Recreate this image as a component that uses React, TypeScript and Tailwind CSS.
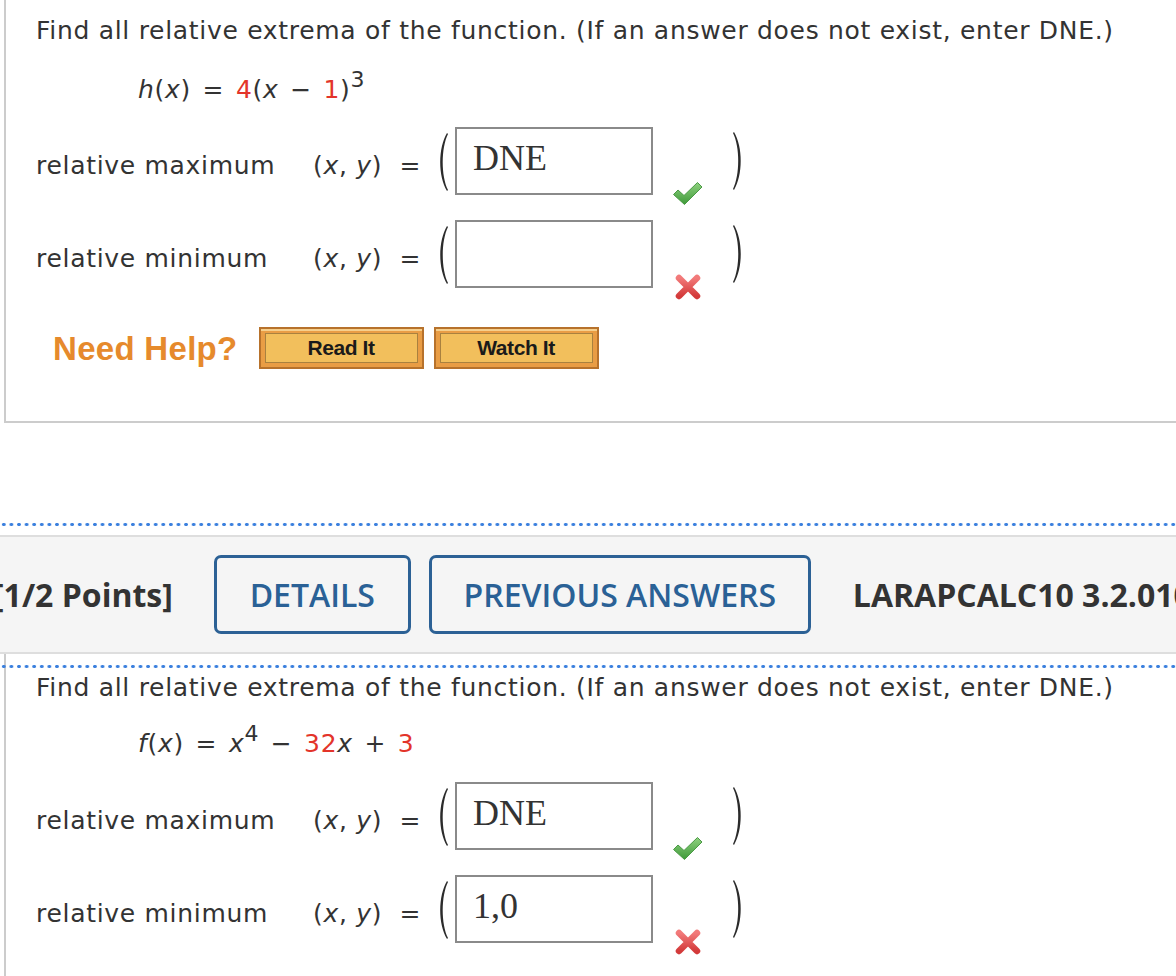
import React from "react";

const sans = { fontFamily: '"DejaVu Sans", Verdana, sans-serif' };

function Paren({ right = false }: { right?: boolean }) {
  return (
    <svg width="14" height="60" viewBox="0 0 14 60" className="shrink-0">
      <g transform={right ? "translate(14,0) scale(-1,1)" : undefined}>
        <path d="M11 1 C2 16 2 44 11 59 L12 58 C5 44 5 16 12 2 Z" fill="#2b2b2b" />
      </g>
    </svg>
  );
}

function Check() {
  return (
    <svg width="31" height="25" viewBox="0 0 31 25">
      <defs>
        <linearGradient id="gck" x1="0" y1="0" x2="0" y2="1">
          <stop offset="0" stopColor="#8fd17f" />
          <stop offset="1" stopColor="#3f9a3a" />
        </linearGradient>
      </defs>
      <path
        d="M1.5 13.5 L6 9 L12 14.5 L25.5 1.5 L30 6 L12.5 23.5 Z"
        fill="url(#gck)"
        stroke="#4a9a45"
        strokeWidth="1"
        strokeLinejoin="round"
      />
    </svg>
  );
}

function Cross() {
  return (
    <svg width="26" height="26" viewBox="0 0 26 26">
      <defs>
        <linearGradient id="gx" x1="0" y1="0" x2="0" y2="1">
          <stop offset="0" stopColor="#f27a7a" />
          <stop offset="1" stopColor="#d33a3a" />
        </linearGradient>
      </defs>
      <path d="M4 4 L22 22 M22 4 L4 22" stroke="url(#gx)" strokeWidth="6.5" strokeLinecap="round" />
    </svg>
  );
}

function Row({
  label,
  value,
  ok,
}: {
  label: string;
  value: string;
  ok: boolean;
}) {
  return (
    <div className="flex items-start h-[68px]">
      <div
        className="w-[277px] shrink-0 h-[68px] flex items-center pt-[9px] text-[25px] tracking-[0.7px] text-[#333]"
        style={sans}
      >
        {label}
      </div>
      <div
        className="w-[123px] shrink-0 h-[68px] flex items-center pt-[9px] text-[25px] tracking-[0.7px] text-[#333] whitespace-pre"
        style={sans}
      >
        (<i>x</i>,{"\u00a0"}
        <i>y</i>){"\u00a0\u00a0"}=
      </div>
      <div className="mt-[5px]">
        <Paren />
      </div>
      <div
        className="ml-[5px] shrink-0 w-[198px] h-[68px] border-2 border-[#8a8a8a] bg-white pl-[16px] flex items-center text-[36px] text-[#333] pb-[6px]"
        style={{ fontFamily: '"Liberation Serif", "Times New Roman", serif' }}
      >
        {value}
      </div>
      <div className="ml-[19px] mt-[54px] w-[31px] flex justify-center">
        {ok ? <Check /> : <Cross />}
      </div>
      <div className="ml-[28px] mt-[4px]">
        <Paren right />
      </div>
    </div>
  );
}

function HelpButton({ label }: { label: string }) {
  return (
    <div className="w-[165px] h-[42px] border-2 border-[#b7722c] bg-[#e99d45] p-[4px] shadow-[inset_0_2px_0_#f6cf8c]">
      <div
        className="w-full h-full border border-[#a9813f] bg-[#f2bf5c] flex items-center justify-center text-[21px] font-bold text-[#1a1a1a] tracking-[-0.4px]"
        style={{ fontFamily: '"Liberation Sans", Arial, sans-serif' }}
      >
        {label}
      </div>
    </div>
  );
}

function Dots({ className = "" }: { className?: string }) {
  return (
    <div
      className={
        "h-[5px] bg-[radial-gradient(circle,#3b80de_1.6px,transparent_1.9px)] bg-[length:7.6px_5px] bg-repeat-x " +
        className
      }
    />
  );
}

const textCls = "text-[25px] tracking-[0.7px] leading-[32px] text-[#333]";

export default function App() {
  return (
    <div className="w-[1176px] h-[976px] overflow-hidden bg-white relative">
      {/* Problem 1 */}
      <div className="ml-[4px] border-l-2 border-b-2 border-[#cccccc] pl-[30px] pt-[15px] pb-[52px]">
        <div className={textCls} style={sans}>
          Find all relative extrema of the function. (If an answer does not exist, enter DNE.)
        </div>
        <div className={"mt-[27px] ml-[102px] whitespace-pre [word-spacing:3px] " + textCls} style={sans}>
          <i>h</i>(<i>x</i>) = <span className="text-[#e3342a]">4</span>(<i>x</i> − <span className="text-[#e3342a]">1</span>)
          <sup className="text-[22px]">3</sup>
        </div>
        <div className="mt-[21px]">
          <Row label="relative maximum" value="DNE" ok={true} />
        </div>
        <div className="mt-[25px]">
          <Row label="relative minimum" value="" ok={false} />
        </div>
        <div className="mt-[39px] flex items-center">
          <div
            className="ml-[17px] text-[33px] font-bold text-[#e68a2c] leading-none tracking-[0.3px]"
            style={{ fontFamily: '"Liberation Sans", Arial, sans-serif' }}
          >
            Need Help?
          </div>
          <div className="ml-[21px]">
            <HelpButton label="Read It" />
          </div>
          <div className="ml-[10px]">
            <HelpButton label="Watch It" />
          </div>
        </div>
      </div>

      {/* Separator */}
      <Dots className="mt-[99px]" />

      {/* Header */}
      <div
        className="mt-[8px] border-y-2 border-[#dedede] bg-[#f5f5f5] h-[119px] flex items-center whitespace-nowrap overflow-hidden"
        style={{ fontFamily: '"Open Sans", sans-serif' }}
      >
        <div className="shrink-0 -ml-[7px] text-[32px] font-bold text-[#333]">[1/2 Points]</div>
        <div className="shrink-0 ml-[41px] w-[197px] h-[79px] border-[3px] border-[#2c6195] rounded-[7px] flex items-center justify-center text-[32px] font-semibold text-[#2a6196]">
          DETAILS
        </div>
        <div className="shrink-0 ml-[18px] w-[382px] h-[79px] border-[3px] border-[#2c6195] rounded-[7px] flex items-center justify-center text-[32px] font-semibold text-[#2a6196]">
          PREVIOUS ANSWERS
        </div>
        <div className="shrink-0 ml-[42px] text-[32px] font-bold text-[#333]">LARAPCALC10 3.2.010</div>
      </div>

      {/* Problem 2 */}
      <div className="ml-[4px] border-l-2 border-[#cccccc] pt-[10px] pb-[40px]">
        <Dots className="-ml-[6px]" />
        <div className="pl-[30px]">
          <div className={"mt-[3px] " + textCls} style={sans}>
            Find all relative extrema of the function. (If an answer does not exist, enter DNE.)
          </div>
          <div className={"mt-[24px] ml-[102px] whitespace-pre [word-spacing:3px] " + textCls} style={sans}>
            <i>f</i>(<i>x</i>) = <i>x</i>
            <sup className="text-[22px]">4</sup> − <span className="text-[#e3342a]">32</span>
            <i>x</i> + <span className="text-[#e3342a]">3</span>
          </div>
          <div className="mt-[22px]">
            <Row label="relative maximum" value="DNE" ok={true} />
          </div>
          <div className="mt-[25px]">
            <Row label="relative minimum" value="1,0" ok={false} />
          </div>
        </div>
      </div>
    </div>
  );
}
